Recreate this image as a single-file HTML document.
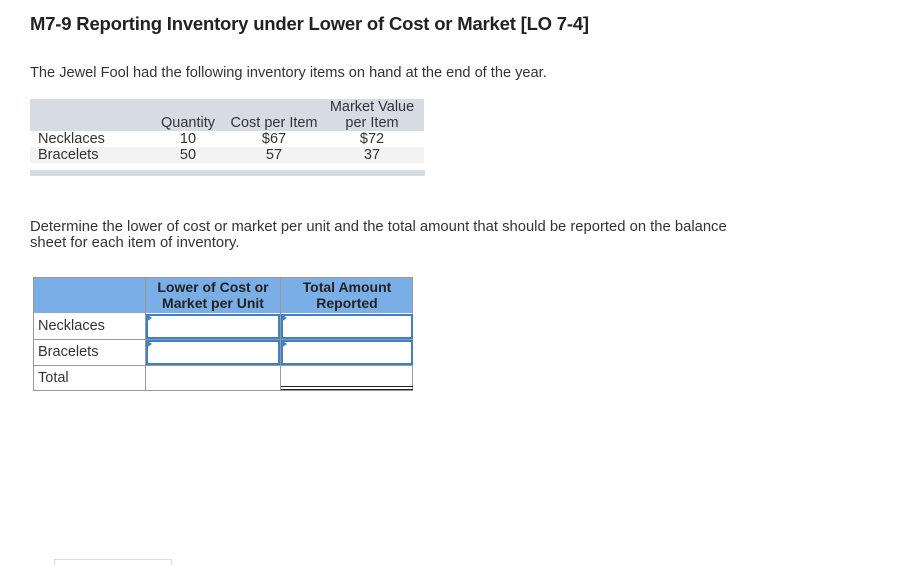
<!DOCTYPE html>
<html><head><style>
body{margin:0;width:909px;height:564px;background:#fff;font-family:"Liberation Sans",Arial,sans-serif;color:#333;position:relative;overflow:hidden}
.a{position:absolute;white-space:nowrap}
.c{text-align:center}
.in{position:absolute;border:2px solid #3f7fc8;box-sizing:border-box;background:#fff}
.tri{position:absolute;width:0;height:0;border-top:4px solid transparent;border-bottom:4px solid transparent;border-left:6px solid #3f7fc8}
</style></head><body>
<div class="a" style="left:30px;top:13px;font-size:18.5px;font-weight:bold;color:#222;letter-spacing:-0.2px">M7-9 Reporting Inventory under Lower of Cost or Market [LO 7-4]</div>
<div class="a" style="left:30px;top:65px;font-size:14.6px;">The Jewel Fool had the following inventory items on hand at the end of the year.</div>

<div class="a" style="left:30px;top:99px;width:394px;height:32px;background:#d7dbe4"></div>
<div class="a" style="left:30px;top:147px;width:394px;height:16px;background:#f3f3f3"></div>
<div class="a" style="left:30px;top:170px;width:395px;height:6px;background:#d7dbe4"></div>
<div class="a c" style="left:322px;width:100px;top:99px;font-size:14.5px;line-height:16px">Market Value<br>per Item</div>
<div class="a c" style="left:155px;width:66px;top:115px;font-size:14.5px;line-height:16px">Quantity</div>
<div class="a c" style="left:225px;width:98px;top:115px;font-size:14.5px;line-height:16px">Cost per Item</div>
<div class="a" style="left:38px;top:131px;font-size:14.5px;line-height:16px">Necklaces<br>Bracelets</div>
<div class="a c" style="left:155px;width:66px;top:131px;font-size:14.5px;line-height:16px">10<br>50</div>
<div class="a c" style="left:225px;width:98px;top:131px;font-size:14.5px;line-height:16px">$67<br>57</div>
<div class="a c" style="left:322px;width:100px;top:131px;font-size:14.5px;line-height:16px">$72<br>37</div>

<div class="a" style="left:30px;top:219px;font-size:14.8px;line-height:16px">Determine the lower of cost or market per unit and the total amount that should be reported on the balance<br>sheet for each item of inventory.</div>

<div class="a" style="left:33px;top:277px;width:380px;height:114px;border:1px solid #999;box-sizing:border-box"></div>
<div class="a" style="left:34px;top:278px;width:378px;height:35px;background:#7aaee6"></div>
<div class="a" style="left:145px;top:278px;width:1px;height:113px;background:#999"></div>
<div class="a" style="left:280px;top:278px;width:1px;height:113px;background:#999"></div>
<div class="a" style="left:34px;top:339px;width:378px;height:1px;background:#999"></div>
<div class="a" style="left:34px;top:365px;width:378px;height:1px;background:#999"></div>
<div class="a c" style="left:146px;width:134px;top:279px;font-size:14px;line-height:16px;font-weight:bold;color:#222">Lower of Cost or<br>Market per Unit</div>
<div class="a c" style="left:281px;width:132px;top:279px;font-size:14px;line-height:16px;font-weight:bold;color:#222">Total Amount<br>Reported</div>
<div class="a" style="left:38px;top:318px;font-size:14.5px">Necklaces</div>
<div class="a" style="left:38px;top:344px;font-size:14.5px">Bracelets</div>
<div class="a" style="left:38px;top:370px;font-size:14.5px">Total</div>
<div class="in" style="left:146px;top:314px;width:134px;height:25px"></div>
<div class="in" style="left:281px;top:314px;width:132px;height:25px"></div>
<div class="in" style="left:146px;top:340px;width:134px;height:25px"></div>
<div class="in" style="left:281px;top:340px;width:132px;height:25px"></div>
<div class="tri" style="left:146px;top:314px"></div>
<div class="tri" style="left:281px;top:314px"></div>
<div class="tri" style="left:146px;top:340px"></div>
<div class="tri" style="left:281px;top:340px"></div>
<div class="a" style="left:281px;top:386px;width:132px;height:1px;background:#222"></div>
<div class="a" style="left:281px;top:389px;width:132px;height:1px;background:#222"></div>

<div class="a" style="left:54px;top:559px;width:118px;height:6px;border:1px solid #ddd;border-bottom:none;box-sizing:border-box"></div>
</body></html>
